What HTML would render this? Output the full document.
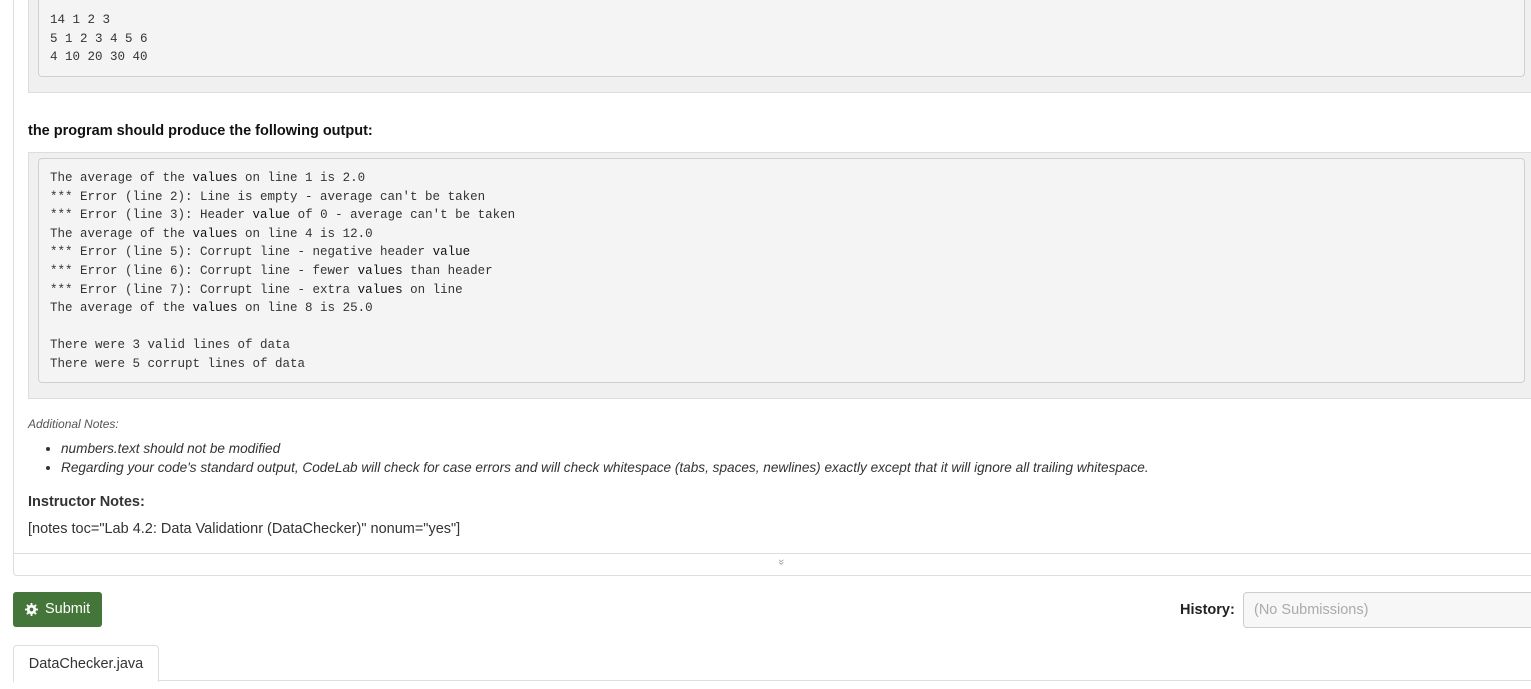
<!DOCTYPE html>
<html><head><style>
body{margin:0;width:1531px;height:689px;background:#fff;font-family:"Liberation Sans",sans-serif;color:#333;position:relative;overflow:hidden}
.a{position:absolute}
.wrap{background:#f0f0f0;border:1px solid #ddd;}
.pre{background:#f4f4f4;border:1px solid #d0d0d0;border-radius:4px;font-family:"Liberation Mono",monospace;font-size:12.5px;color:#333;line-height:18.6px;white-space:pre}
.pre b{font-weight:normal;color:#111}
</style></head><body>
<div class="a" style="left:13px;top:-2px;width:1540px;height:576px;border:1px solid #ddd;border-radius:4px"></div>
<div class="a" style="left:14px;top:553px;width:1520px;border-top:1px solid #ddd"></div>
<div class="a" style="left:778px;top:556px;font-size:11px;color:#999;transform:rotate(90deg)">&raquo;</div>
<div class="a wrap" style="left:28px;top:-2px;width:1510px;height:93px"></div>
<div class="a pre" style="left:38px;top:-5px;width:1485px;height:80px"><div style="padding:15px 11px 0">14 1 2 3
5 1 2 3 4 5 6
4 10 20 30 40</div></div>
<div class="a" style="left:28px;top:123px;font-size:14.5px;font-weight:bold;color:#111">the program should produce the following output:</div>
<div class="a wrap" style="left:28px;top:152px;width:1510px;height:245px"></div>
<div class="a pre" style="left:38px;top:158px;width:1485px;height:223px"><div style="padding:10px 11px">The average of the <b>values</b> on line 1 is 2.0
*** Error (line 2): Line is empty - average can't be taken
*** Error (line 3): Header <b>value</b> of 0 - average can't be taken
The average of the <b>values</b> on line 4 is 12.0
*** Error (line 5): Corrupt line - negative header <b>value</b>
*** Error (line 6): Corrupt line - fewer <b>values</b> than header
*** Error (line 7): Corrupt line - extra <b>values</b> on line
The average of the <b>values</b> on line 8 is 25.0

There were 3 valid lines of data
There were 5 corrupt lines of data</div></div>
<div class="a" style="left:28px;top:417px;font-size:12px;font-style:italic;color:#555">Additional Notes:</div>
<ul class="a" style="left:20px;top:439px;margin:0;padding-left:41px;font-size:13.6px;font-style:italic;color:#333;line-height:19px">
<li>numbers.text should not be modified</li>
<li>Regarding your code's standard output, CodeLab will check for case errors and will check whitespace (tabs, spaces, newlines) exactly except that it will ignore all trailing whitespace.</li></ul>
<div class="a" style="left:28px;top:494px;font-size:14.5px;font-weight:bold;color:#333">Instructor Notes:</div>
<div class="a" style="left:28px;top:521px;font-size:14.5px;color:#333">[notes toc="Lab 4.2: Data Validationr (DataChecker)" nonum="yes"]</div>
<div class="a" style="left:13px;top:592px;width:89px;height:35px;background:#44763a;border-radius:3px;color:#fff;font-size:14.5px;line-height:35px">
<svg class="a" style="left:12px;top:11px" width="13" height="13" viewBox="0 0 14 14"><g fill="#fff"><circle cx="7" cy="7" r="5"/><rect x="6" y="0" width="2" height="14"/><rect x="0" y="6" width="14" height="2"/><rect x="6" y="0" width="2" height="14" transform="rotate(45 7 7)"/><rect x="6" y="0" width="2" height="14" transform="rotate(-45 7 7)"/></g><circle cx="7" cy="7" r="2" fill="#44763a"/></svg>
<span class="a" style="left:32px;top:0">Submit</span></div>
<div class="a" style="left:1180px;top:602px;font-size:14.5px;font-weight:bold;color:#222">History:</div>
<div class="a" style="left:1243px;top:592px;width:300px;height:34px;background:#f7f7f7;border:1px solid #ccc;border-radius:4px;font-size:14.5px;color:#aaa;line-height:34px"><span style="padding-left:10px">(No Submissions)</span></div>
<div class="a" style="left:13px;top:680px;width:1540px;border-top:1px solid #ddd"></div>
<div class="a" style="left:13px;top:645px;width:144px;height:36px;border:1px solid #ddd;border-bottom:none;border-radius:4px 4px 0 0;background:#fff;font-size:14.5px;color:#333;line-height:36px;text-align:center">DataChecker.java</div>
</body></html>
